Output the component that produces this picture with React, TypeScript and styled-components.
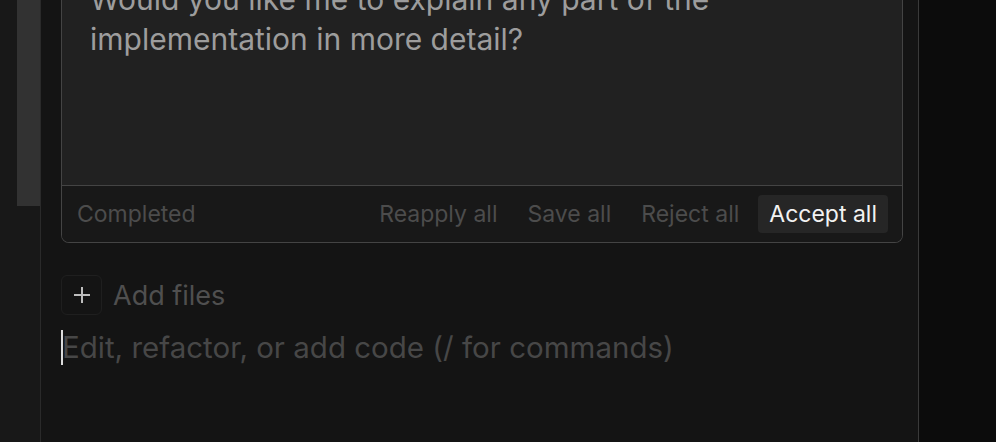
import React from 'react';
import styled, { createGlobalStyle } from 'styled-components';

const GlobalStyle = createGlobalStyle`
  *, *::before, *::after {
    box-sizing: border-box;
  }
  html, body {
    margin: 0;
    padding: 0;
    background: #0c0c0c;
    font-family: Inter, "Noto Sans", "Liberation Sans", sans-serif;
    -webkit-font-smoothing: antialiased;
  }
`;

const Page = styled.div`
  display: flex;
  width: 996px;
  height: 442px;
  overflow: hidden;
`;

const Gutter = styled.div`
  width: 41px;
  flex: none;
  background: #181818;
  border-right: 1px solid #2a2a2a;
  display: flex;
  justify-content: flex-end;
`;

const ScrollThumb = styled.div`
  width: 23px;
  height: 206px;
  background: #323232;
`;

const Panel = styled.div`
  width: 878px;
  flex: none;
  background: #141414;
  border-right: 1px solid #3a3a3a;
  padding: 0 15px 0 20px;
  display: flex;
  flex-direction: column;
`;

const Side = styled.div`
  flex: 1;
  background: #0c0c0c;
`;

const Card = styled.div`
  border: 1px solid #444;
  border-top: none;
  border-radius: 0 0 8px 8px;
  overflow: hidden;
`;

const Body = styled.div`
  height: 207px;
  margin-top: -21px;
  padding: 0 28px;
  background: #212121;
  color: #9d9d9d;
  font-size: 30px;
  line-height: 40px;
  border-bottom: 1px solid #444;
  white-space: nowrap;
`;

const Footer = styled.div`
  height: 56px;
  display: flex;
  align-items: center;
  padding: 0 14px 0 15px;
  background: #181818;
  gap: 8px;
`;

const Status = styled.span`
  flex: 1;
  color: #4c4c4c;
  font-size: 23px;
`;

const Action = styled.button<{ $primary?: boolean }>`
  height: 38px;
  padding: 0 11px;
  border: none;
  border-radius: 4px;
  font-family: inherit;
  font-size: 23px;
  background: ${(p) => (p.$primary ? '#262626' : 'transparent')};
  color: ${(p) => (p.$primary ? '#f2f2f2' : '#4c4c4c')};
`;

const AddRow = styled.div`
  display: flex;
  align-items: center;
  gap: 11px;
  margin-top: 32px;
`;

const PlusBox = styled.div`
  width: 41px;
  height: 40px;
  border: 1px solid #1f1f1f;
  border-radius: 6px;
  display: flex;
  align-items: center;
  justify-content: center;
`;

const AddLabel = styled.span`
  color: #4f4f4f;
  font-size: 27px;
`;

const Composer = styled.div`
  display: flex;
  align-items: center;
  margin-top: 14px;
  height: 36px;
`;

const Caret = styled.span`
  width: 2px;
  height: 35px;
  background: #dcdcdc;
  flex: none;
`;

const Placeholder = styled.span`
  color: #474747;
  font-size: 29.5px;
  margin-left: -1px;
`;

const PlusIcon = () => (
  <svg width="18" height="18" viewBox="0 0 18 18">
    <path d="M9 1v16M1 9h16" stroke="#bdbdbd" strokeWidth="2" />
  </svg>
);

export default function App() {
  return (
    <>
      <GlobalStyle />
      <Page>
        <Gutter>
          <ScrollThumb />
        </Gutter>
        <Panel>
          <Card>
            <Body>
              Would you like me to explain any part of the
              <br />
              implementation in more detail?
            </Body>
            <Footer>
              <Status>Completed</Status>
              <Action>Reapply all</Action>
              <Action>Save all</Action>
              <Action>Reject all</Action>
              <Action $primary>Accept all</Action>
            </Footer>
          </Card>
          <AddRow>
            <PlusBox>
              <PlusIcon />
            </PlusBox>
            <AddLabel>Add files</AddLabel>
          </AddRow>
          <Composer>
            <Caret />
            <Placeholder>Edit, refactor, or add code (/ for commands)</Placeholder>
          </Composer>
        </Panel>
        <Side />
      </Page>
    </>
  );
}
